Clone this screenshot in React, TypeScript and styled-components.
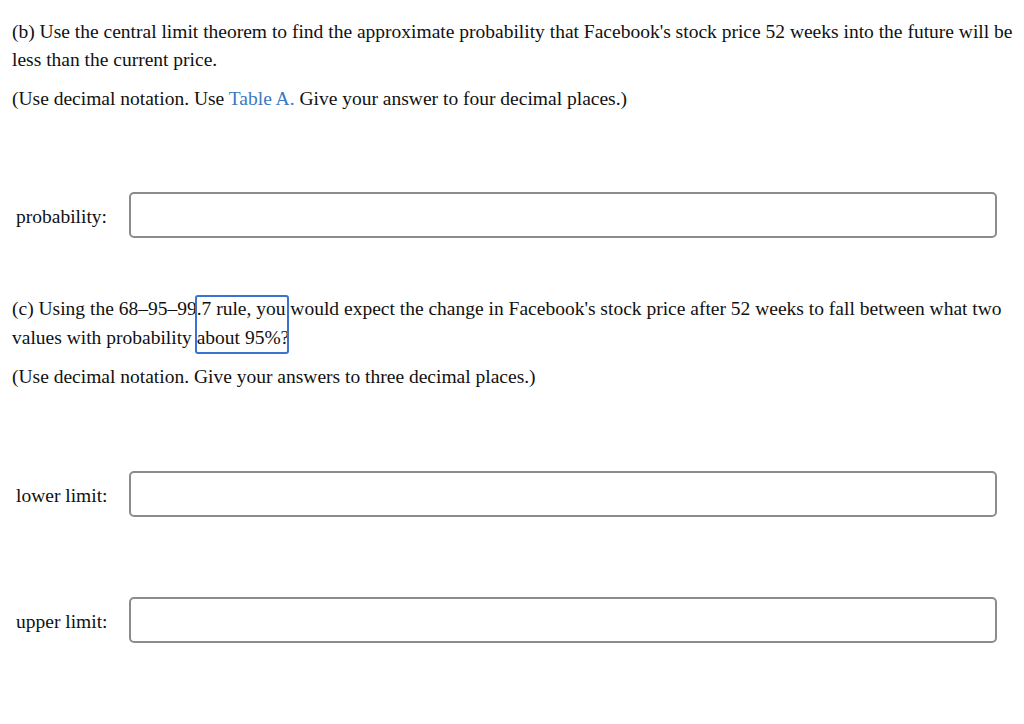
import React from "react";
import styled, { createGlobalStyle } from "styled-components";

const Global = createGlobalStyle`
  html, body { margin: 0; padding: 0; background: #ffffff; }
  body { font-family: "Liberation Serif", "Times New Roman", serif; color: #111; }
`;

const Page = styled.div`
  width: 1004px;
  padding: 18px 0 0 12px;
  font-size: 19.5px;
  line-height: 28px;
`;

const Para = styled.p<{ $mt?: number; $lh?: number }>`
  margin: ${(p) => p.$mt ?? 0}px 0 0 0;
  line-height: ${(p) => p.$lh ?? 28}px;
  position: relative;
`;

const Link = styled.a`
  color: #3c78c0;
  text-decoration: none;
`;

const Row = styled.div<{ $mt: number }>`
  display: flex;
  align-items: center;
  margin-top: ${(p) => p.$mt}px;
`;

const Label = styled.label`
  width: 113px;
  padding: 3px 0 0 4px;
  flex: none;
`;

const Field = styled.input`
  box-sizing: border-box;
  width: 868px;
  height: 46px;
  border: 2px solid #8c8c8c;
  border-radius: 5px;
  background: #fff;
  outline: none;
  font: inherit;
  padding: 0 10px;
`;

const Highlight = styled.span`
  position: absolute;
  left: 183px;
  top: 1px;
  width: 94px;
  height: 59px;
  box-sizing: border-box;
  border: 2px solid #3a74d2;
  border-radius: 3px;
  pointer-events: none;
`;

export default function App() {
  return (
    <>
      <Global />
      <Page>
        <Para>
          (b) Use the central limit theorem to find the approximate probability that Facebook's stock price 52 weeks into the future will be less than the current price.
        </Para>
        <Para $mt={11}>
          (Use decimal notation. Use <Link href="#">Table A.</Link> Give your answer to four decimal places.)
        </Para>
        <Row $mt={79}>
          <Label>probability:</Label>
          <Field type="text" />
        </Row>
        <Para $mt={56} $lh={29}>
          (c) Using the 68–95–99.7 rule, you would expect the change in Facebook's stock price after 52 weeks to fall between what two values with probability about 95%?
          <Highlight />
        </Para>
        <Para $mt={11}>
          (Use decimal notation. Give your answers to three decimal places.)
        </Para>
        <Row $mt={80}>
          <Label>lower limit:</Label>
          <Field type="text" />
        </Row>
        <Row $mt={80}>
          <Label>upper limit:</Label>
          <Field type="text" />
        </Row>
      </Page>
    </>
  );
}
